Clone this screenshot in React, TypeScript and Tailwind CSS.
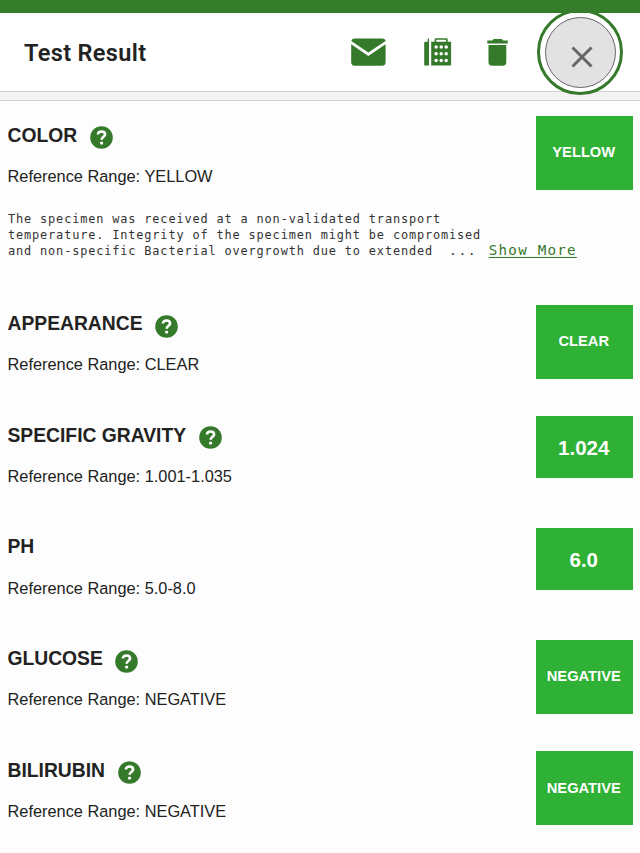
import React from 'react';

interface Result {
  name: string;
  range: string;
  value: string;
  help: boolean;
  note?: string[];
}

const results: Result[] = [
  {
    name: 'COLOR',
    range: 'YELLOW',
    value: 'YELLOW',
    help: true,
    note: [
      'The specimen was received at a non-validated transport',
      'temperature. Integrity of the specimen might be compromised',
      'and non-specific Bacterial overgrowth due to extended',
    ],
  },
  { name: 'APPEARANCE', range: 'CLEAR', value: 'CLEAR', help: true },
  { name: 'SPECIFIC GRAVITY', range: '1.001-1.035', value: '1.024', help: true },
  { name: 'PH', range: '5.0-8.0', value: '6.0', help: false },
  { name: 'GLUCOSE', range: 'NEGATIVE', value: 'NEGATIVE', help: true },
  { name: 'BILIRUBIN', range: 'NEGATIVE', value: 'NEGATIVE', help: true },
];

const MailIcon = () => (
  <svg width="35" height="28" viewBox="0 0 35 28" fill="currentColor">
    <path d="M3.5 .4h28C33.3 .4 34.4 1.4 34.6 2.9L17.3 14.6 0.3 2.9C0.6 1.4 1.7 .4 3.5 .4Z" />
    <path d="M0.2 6.2 17.3 18.1 34.6 6.2V24.3a3.4 3.4 0 0 1-3.4 3.4H3.6A3.4 3.4 0 0 1 .2 24.3Z" />
  </svg>
);

const dots = [
  [12.1, 9],
  [17.2, 9],
  [22.2, 9],
  [12.1, 15.7],
  [17.2, 15.7],
  [22.2, 15.7],
  [12.1, 22.4],
  [17.2, 22.4],
  [22.2, 22.4],
];

const FaxIcon = () => (
  <svg width="28" height="28" viewBox="0 0 28 28" fill="currentColor">
    <path d="M1.4 3.7H3.7V.5H5V27.6H1.4A1.2 1.2 0 0 1 .2 26.4V4.9A1.2 1.2 0 0 1 1.4 3.7Z" />
    <path
      fillRule="evenodd"
      d="M7.2 3.7h3.4V1.6A1.4 1.4 0 0 1 12 .2h10.3a1.4 1.4 0 0 1 1.4 1.4v2.1H27.1v22.7a1.2 1.2 0 0 1-1.2 1.2H7.2ZM12.2 1.7v2h9.9v-2Z"
    />
    {dots.map(([cx, cy]) => (
      <circle key={`${cx}-${cy}`} cx={cx} cy={cy} r="1.75" fill="white" />
    ))}
  </svg>
);

const TrashIcon = () => (
  <svg width="22" height="28" viewBox="0 0 22 28" fill="currentColor">
    <path d="M1 2.6H5.4C6 1.2 6.8.9 7.6.9H13.8C14.6.9 15.4 1.2 16 2.6H20.8V5.4H.3V2.6Z" />
    <path d="M1.5 7H19.3V24.3a3.4 3.4 0 0 1-3.4 3.4H4.9a3.4 3.4 0 0 1-3.4-3.4Z" />
  </svg>
);

const HelpIcon = () => (
  <svg width="23" height="23" viewBox="0 0 23 23" className="mt-[5px] ml-[12.6px] text-[#35792a]">
    <circle cx="11.5" cy="11.5" r="11.3" fill="currentColor" />
    <path
      d="M7.9 8.6C7.9 6.5 9.4 5.5 11.5 5.5S15.1 6.6 15.1 8.5C15.1 10.7 11.6 10.9 11.6 13.8"
      fill="none"
      stroke="white"
      strokeWidth="2.6"
    />
    <rect x="10.1" y="15.8" width="3" height="2.8" rx=".8" fill="white" />
  </svg>
);

const Header = () => (
  <header>
    <div className="relative z-20 h-[13px] bg-[#357c2b]" />
    <div className="flex h-[78px] items-center bg-white pl-6 text-[#35792a]">
      <h1 className="mt-[3px] w-[327px] font-['Roboto'] text-[23.5px] font-semibold tracking-[0.35px] text-[#222]">
        Test Result
      </h1>
      <button type="button" aria-label="Email" className="mr-[38px]">
        <MailIcon />
      </button>
      <button type="button" aria-label="Fax" className="mr-[35px]">
        <FaxIcon />
      </button>
      <button type="button" aria-label="Delete" className="mr-[28px]">
        <TrashIcon />
      </button>
      <button
        type="button"
        aria-label="Close"
        className="relative z-10 -my-1 size-[86px] shrink-0 rounded-full border-[3px] border-[#35792a] bg-white p-[4.5px]"
      >
        <span className="flex size-full items-center justify-center rounded-full border-[1.5px] border-[#666] bg-[#e2e2e2]">
          <svg
            width="24"
            height="24"
            viewBox="0 0 24 24"
            className="mt-[9px] ml-[3px]"
            stroke="#666"
            strokeWidth="3"
          >
            <path d="M2.5 2.5 21.5 21.5M21.5 2.5 2.5 21.5" />
          </svg>
        </span>
      </button>
    </div>
    <div className="h-[10px] border-y border-[#d2d2d2] bg-[#f3f3f3]" />
  </header>
);

const ResultRow = ({ result }: { result: Result }) => {
  const numeric = !isNaN(Number(result.value));

  return (
    <section className={result.note ? 'h-[188.8px]' : 'h-[111.6px]'}>
      <div className="flex items-start justify-between pr-[7.5px] pl-[7.5px]">
        <div>
          <div className="flex h-[38px] items-center">
            <h2 className="pt-px text-[19.3px] leading-[38px] font-bold">{result.name}</h2>
            {result.help && <HelpIcon />}
          </div>
          <p className="mt-[10.6px] text-[16.35px] leading-[22px]">
            Reference Range: {result.range}
          </p>
        </div>
        <div
          className={
            numeric
              ? 'flex h-[62px] w-[96.5px] items-center justify-center bg-[#2eb135] pt-[2px] pr-px text-[20.5px] font-bold text-white'
              : 'flex h-[74px] w-[96.5px] items-center justify-center bg-[#2eb135] pr-px pb-px text-[14.7px] font-bold text-white'
          }
        >
          {result.value}
        </div>
      </div>
      {result.note && (
        <div className="mt-[22px] pl-2 font-['DejaVu_Sans_Mono',monospace] text-[11.9px] leading-[15.6px] tracking-[0.86px] whitespace-pre text-[#333]">
          {result.note.map((line, i) => (
            <p key={line}>
              {line}
              {i === 2 && (
                <>
                  <span className="ml-[16px] text-[13px] leading-none tracking-[1.6px]">...</span>
                  <a
                    href="#"
                    className="ml-[11.5px] text-[14.2px] leading-none tracking-[1.25px] text-[#35792a] underline underline-offset-[2px]"
                  >
                    Show More
                  </a>
                </>
              )}
            </p>
          ))}
        </div>
      )}
    </section>
  );
};

export default function App() {
  return (
    <div className="h-[853px] w-[640px] overflow-hidden bg-[#fdfdfd] font-['Liberation_Sans',Arial,sans-serif] text-[#222]">
      <Header />
      <main className="pt-[15px]">
        {results.map((result) => (
          <ResultRow key={result.name} result={result} />
        ))}
      </main>
    </div>
  );
}
